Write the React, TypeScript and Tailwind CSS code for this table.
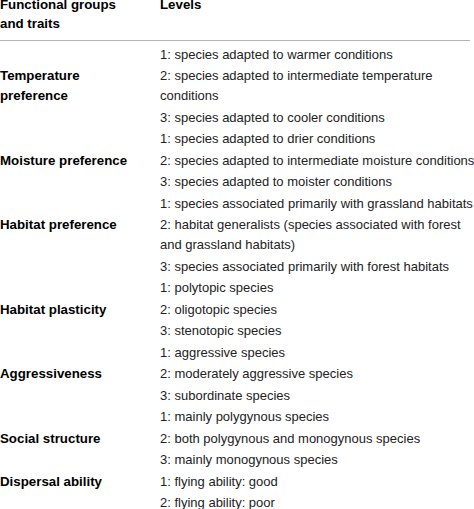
const groups: { label: string; at: number; levels: string[] }[] = [
  {
    label: "Temperature preference",
    at: 1,
    levels: [
      "1: species adapted to warmer conditions",
      "2: species adapted to intermediate temperature conditions",
      "3: species adapted to cooler conditions",
    ],
  },
  {
    label: "Moisture preference",
    at: 1,
    levels: [
      "1: species adapted to drier conditions",
      "2: species adapted to intermediate moisture conditions",
      "3: species adapted to moister conditions",
    ],
  },
  {
    label: "Habitat preference",
    at: 1,
    levels: [
      "1: species associated primarily with grassland habitats",
      "2: habitat generalists (species associated with forest and grassland habitats)",
      "3: species associated primarily with forest habitats",
    ],
  },
  {
    label: "Habitat plasticity",
    at: 1,
    levels: ["1: polytopic species", "2: oligotopic species", "3: stenotopic species"],
  },
  {
    label: "Aggressiveness",
    at: 1,
    levels: ["1: aggressive species", "2: moderately aggressive species", "3: subordinate species"],
  },
  {
    label: "Social structure",
    at: 1,
    levels: [
      "1: mainly polygynous species",
      "2: both polygynous and monogynous species",
      "3: mainly monogynous species",
    ],
  },
  {
    label: "Dispersal ability",
    at: 0,
    levels: ["1: flying ability: good", "2: flying ability: poor"],
  },
];

const App = () => {
  return (
    <div className="w-[474px] h-[509px] overflow-hidden bg-white font-['Liberation_Sans',Arial,sans-serif] text-[13px] text-black">
      <div className="-mt-[4px]">
        {/* Header */}
        <div className="flex w-[470px] border-b-[1.5px] border-[#b4b4b4] pb-[6.5px] font-bold text-[13.3px] leading-[18.5px]">
          <div className="w-[160px] shrink-0">
            Functional groups
            <br />
            and traits
          </div>
          <div>Levels</div>
        </div>

        {/* Body */}
        <div className="mt-[3.5px]">
          {groups.map((g) =>
            g.levels.map((lv, i) => (
              <div key={g.label + i} className="flex py-[0.75px] leading-[20px]">
                <div className="w-[160px] shrink-0 pr-4 font-bold text-[13.3px]">
                  {i === g.at ? g.label : ""}
                </div>
                <div className="w-[318px] shrink-0 text-[#222]">{lv}</div>
              </div>
            ))
          )}
        </div>
      </div>
    </div>
  );
};

export default App;
